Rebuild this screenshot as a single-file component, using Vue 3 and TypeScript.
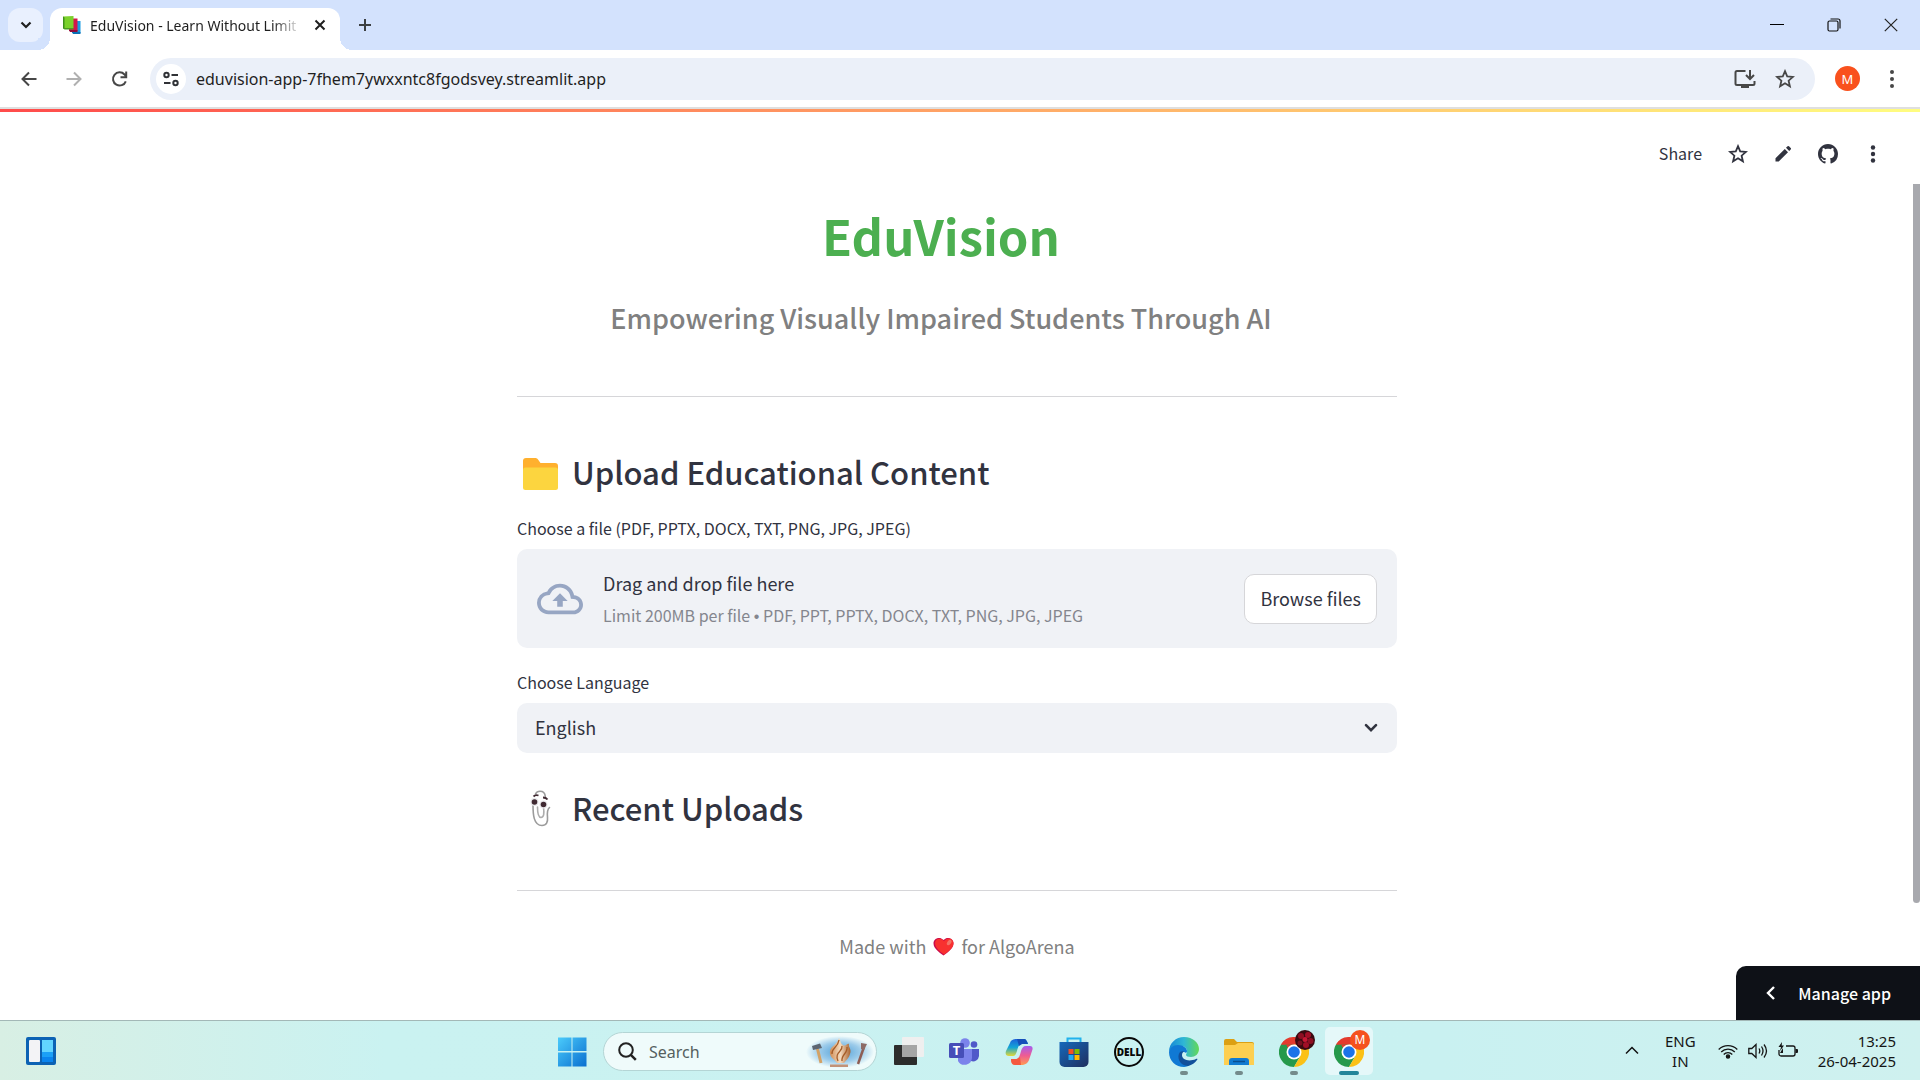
<script setup lang="ts">
import { ref } from 'vue'

const address = ref('eduvision-app-7fhem7ywxxntc8fgodsvey.streamlit.app')
const language = ref('English')
const languages = ['English']
</script>

<template>
  <div class="screen">
    <header class="tabstrip">
      <button class="tab-search" aria-label="Search tabs">
        <svg width="16" height="16" viewBox="0 0 16 16"><path d="M3.500 5.500 8 10l4.500-4.500" fill="none" stroke="#1f1f1f" stroke-width="2.200" /></svg>
      </button>
      <div class="tab">
        <svg class="favicon" width="18" height="18" viewBox="0 0 18 18">
          <path d="M9 5h8.500v12H9z" fill="#1b9de2" />
          <path d="M9 16h8.500v2H10z" fill="#0a6fb5" />
          <path d="M6 2.500h8.500V15H6z" fill="#d3154b" />
          <path d="M6 14h8.500v2H7z" fill="#8f0c3a" />
          <path d="M0 .5L10.500 0v12L0 12.500z" fill="#7bd12b" />
          <path d="M0 .5l1.500 1v11H0z" fill="#3f8f1d" />
          <path d="M0 12h10.500v1.500H1.500z" fill="#4b9b22" />
        </svg>
        <span class="tab-title">EduVision - Learn Without Limit</span>
        <button class="tab-close" aria-label="Close tab">
          <svg width="12" height="12" viewBox="0 0 12 12"><path d="M1.500 1.500l9 9m0-9l-9 9" stroke="#1f1f1f" stroke-width="2" /></svg>
        </button>
      </div>
      <button class="new-tab" aria-label="New tab">
        <svg width="14" height="14" viewBox="0 0 14 14"><path d="M7 1v12M1 7h12" stroke="#3c4043" stroke-width="2" /></svg>
      </button>
      <div class="window-controls">
        <button aria-label="Minimize"><svg width="14" height="14" viewBox="0 0 14 14"><path d="M0 6.500h14" stroke="#000" /></svg></button>
        <button aria-label="Restore"><svg width="14" height="14" viewBox="0 0 14 14" fill="none" stroke="#111" stroke-width="1.200"><rect x="1" y="3" width="10" height="10" rx="1.500" /><path d="M3.500 1H11a2 2 0 0 1 2 2v7.500" /></svg></button>
        <button aria-label="Close"><svg width="14" height="14" viewBox="0 0 14 14"><path d="M.8.8l12.400 12.400m0-12.400L.8 13.200" stroke="#222" stroke-width="1.200" /></svg></button>
      </div>
    </header>

    <nav class="toolbar">
      <button class="nav-button" aria-label="Back"><svg width="20" height="20" viewBox="0 0 20 20"><path d="M17.500 10H3.500m6.500-6.500L3.500 10l6.500 6.500" fill="none" stroke="#474747" stroke-width="2" /></svg></button>
      <button class="nav-button" aria-label="Forward"><svg width="20" height="20" viewBox="0 0 20 20"><path d="M2.500 10h14M10 3.500l6.500 6.500-6.500 6.500" fill="none" stroke="#b0b0b0" stroke-width="2" /></svg></button>
      <button class="nav-button" aria-label="Reload"><svg width="20" height="20" viewBox="0 0 20 20"><path d="M16.800 12.300A6.600 6.600 0 1 1 15.500 5.500L17 7.500M17.200 2.500v5.700H11.500" fill="none" stroke="#474747" stroke-width="2" /></svg></button>
      <div class="omnibox">
        <button class="site-info" aria-label="View site information">
          <svg width="18" height="18" viewBox="0 0 18 18" fill="none" stroke="#303236" stroke-width="2"><circle cx="4.500" cy="5" r="2.200" /><path d="M9.500 5H16M2 13h6.500" /><circle cx="13.500" cy="13" r="2.200" /></svg>
        </button>
        <input v-model="address" class="address" type="text" aria-label="Address" spellcheck="false" />
        <button class="omni-button" aria-label="Install app">
          <svg width="22" height="20" viewBox="0 0 22 20"><path d="M11.500 2H3a1.500 1.500 0 0 0-1.500 1.500v11A1.500 1.500 0 0 0 3 16h16a1.500 1.500 0 0 0 1.500-1.500V12M16 1v9m-4-4l4 4 4-4" fill="none" stroke="#474747" stroke-width="2" /><path d="M7 16h8v3H7z" fill="#474747" /></svg>
        </button>
        <button class="omni-button" aria-label="Bookmark this tab">
          <svg width="20" height="20" viewBox="0 0 20 20"><path d="M10 2.200l2.200 5.200 5.700.5-4.300 3.800 1.300 5.600-4.900-3-4.900 3 1.300-5.600L2.100 7.900l5.700-.5z" fill="none" stroke="#474747" stroke-width="1.800" /></svg>
        </button>
      </div>
      <button class="profile" aria-label="Profile">M</button>
      <button class="menu-button" aria-label="Browser menu"><svg width="20" height="20" viewBox="0 0 20 20" fill="#474747"><circle cx="10" cy="3" r="2" /><circle cx="10" cy="10" r="2" /><circle cx="10" cy="17" r="2" /></svg></button>
    </nav>
    <div class="decoration"></div>

    <div class="app">
      <div class="app-header">
        <button class="share">Share</button>
        <button class="action" aria-label="Favourite"><svg width="20" height="20" viewBox="0 0 20 20"><path d="M10 2.200l2.200 5.200 5.700.5-4.300 3.800 1.300 5.600-4.900-3-4.900 3 1.300-5.600L2.100 7.900l5.700-.5z" fill="none" stroke="#31333f" stroke-width="1.800" /></svg></button>
        <button class="action" aria-label="Edit"><svg width="18" height="18" viewBox="0 0 18 18" fill="#31333f"><path d="M1.500 13.300L10.800 4l3.200 3.200-9.300 9.300H1.500zM12 2.800l1.600-1.500a1 1 0 0 1 1.400 0L16.700 3a1 1 0 0 1 0 1.400l-1.500 1.600z" /></svg></button>
        <button class="action" aria-label="View source on GitHub"><svg width="20" height="20" viewBox="0 0 16 16" fill="#31333f"><path d="M8 0C3.580 0 0 3.580 0 8c0 3.540 2.290 6.530 5.470 7.590.4.070.55-.17.55-.38 0-.19-.01-.82-.01-1.490-2.010.37-2.530-.49-2.690-.94-.09-.23-.48-.94-.82-1.130-.28-.15-.68-.52-.01-.53.63-.01 1.080.58 1.230.82.72 1.210 1.870.87 2.330.66.07-.52.28-.87.51-1.070-1.780-.2-3.640-.89-3.640-3.950 0-.87.31-1.590.82-2.150-.08-.2-.36-1.020.08-2.120 0 0 .67-.21 2.200.82.64-.18 1.320-.27 2-.27s1.360.09 2 .27c1.530-1.040 2.200-.82 2.200-.82.44 1.100.16 1.920.08 2.120.51.56.82 1.270.82 2.150 0 3.070-1.870 3.750-3.650 3.950.29.25.54.73.54 1.480 0 1.070-.01 1.930-.01 2.200 0 .21.15.46.55.38A8.010 8.010 0 0 0 16 8c0-4.420-3.580-8-8-8z" /></svg></button>
        <button class="action" aria-label="App menu"><svg width="20" height="20" viewBox="0 0 20 20" fill="#31333f"><circle cx="10" cy="3.500" r="2.200" /><circle cx="10" cy="10" r="2.200" /><circle cx="10" cy="16.500" r="2.200" /></svg></button>
      </div>

      <main class="content">
        <h1>EduVision</h1>
        <p class="tagline">Empowering Visually Impaired Students Through AI</p>
        <hr />
        <h2>
          <svg class="heading-icon" width="48" height="40" viewBox="0 0 48 40">
            <path d="M6 9a3 3 0 0 1 3-3h9c1.500 0 2.300.5 3 1.500l2.500 3.500H38a3 3 0 0 1 3 3v6H6z" fill="#ffb02e" />
            <rect x="6" y="15.500" width="35" height="22.500" rx="2.500" fill="#fcd53f" />
          </svg>
          Upload Educational Content
        </h2>

        <label class="field-label" for="browse">Choose a file (PDF, PPTX, DOCX, TXT, PNG, JPG, JPEG)</label>
        <section class="dropzone">
          <svg width="46" height="46" viewBox="0 0 24 24" fill="#97a6c3"><path d="M19.350 10.040A7.490 7.490 0 0 0 12 4C9.110 4 6.600 5.640 5.350 8.040A5.994 5.994 0 0 0 0 14c0 3.310 2.690 6 6 6h13c2.760 0 5-2.240 5-5 0-2.640-2.050-4.780-4.650-4.960zM19 18H6c-2.210 0-4-1.790-4-4 0-2.050 1.530-3.760 3.560-3.970l1.070-.11.500-.95A5.469 5.469 0 0 1 12 6c2.620 0 4.880 1.860 5.390 4.430l.3 1.500 1.530.11A2.980 2.980 0 0 1 22 15c0 1.650-1.350 3-3 3zM8 13h2.550v3h2.900v-3H16l-4-4z" /></svg>
          <div class="drop-text">
            <span class="drop-title">Drag and drop file here</span>
            <span class="drop-hint">Limit 200MB per file <span class="bullet">•</span> PDF, PPT, PPTX, DOCX, TXT, PNG, JPG, JPEG</span>
          </div>
          <button id="browse" class="browse">Browse files</button>
        </section>

        <label class="field-label language-label" for="language">Choose Language</label>
        <div class="select-wrap">
          <select id="language" v-model="language">
            <option v-for="item in languages" :key="item">{{ item }}</option>
          </select>
          <svg class="select-arrow" width="14" height="10" viewBox="0 0 14 10"><path d="M2 2.200l5 5 5-5" fill="none" stroke="#31333f" stroke-width="2.600" stroke-linecap="round" /></svg>
        </div>

        <h2 class="recent">
          <svg class="heading-icon" width="48" height="40" viewBox="0 0 48 40">
            <g fill="none" stroke="#9b9b9b" stroke-width="1.600" stroke-linecap="round">
              <path d="M18.500 6c1-2 2.500-2.700 4.500-2.700 3 0 5 2.200 5.300 5.200" />
              <path d="M16 17c0 9 .5 20.500 9 20.500 4.500 0 6-3.500 5.500-8.500-.4-4-.3-7.500 2-9.500" />
              <path d="M20.500 19c0 6 .5 10.500 3.500 10.500s3.300-4 2.500-10.500" stroke="#adadad" />
            </g>
            <circle cx="17.500" cy="14" r="4" fill="#e9e9ec" /><circle cx="26.500" cy="16.500" r="4" fill="#e9e9ec" />
            <circle cx="17.500" cy="14" r="2.800" fill="#402a32" /><circle cx="26.500" cy="16.500" r="2.800" fill="#402a32" />
            <path d="M16.500 8.500q2-2 5-1M26 9.500q3 0 4.500 2" fill="none" stroke="#402a32" stroke-width="1.800" />
          </svg>
          Recent Uploads
        </h2>
        <hr class="lower" />
        <p class="credit">
          Made with
          <svg width="21" height="19" viewBox="0 0 21 19" role="img" aria-label="love"><path d="M10.500 18.500C6 15 .5 11.500.5 6.200.5 1.500 6.500-1.200 10.500 3c4-4.200 10-1.500 10 3.200 0 5.300-5.500 8.800-10 12.300z" fill="#ca0b4a" /><path d="M11 17.500C7 14.500 2 11 2 6c0-4.500 6-6 9-1.800C14-.6 20.500 1.200 20.500 6.200c0 4.800-5.500 8.300-9.500 11.300z" fill="#f8312f" /><ellipse cx="16.200" cy="5.500" rx="1.900" ry="3" transform="rotate(35 16.200 5.500)" fill="#f37366" /></svg>
          for AlgoArena
        </p>
      </main>

      <div class="scroll-thumb"></div>
      <button class="manage">
        <svg width="10" height="16" viewBox="0 0 10 16"><path d="M8 2L2 8l6 6" fill="none" stroke="#fff" stroke-width="2.400" /></svg>
        Manage app
      </button>
    </div>

    <footer class="taskbar">
      <div class="task-left">
        <button class="task" aria-label="Widgets">
          <svg width="30" height="28" viewBox="0 0 30 28"><rect width="30" height="28" rx="2" fill="#0c62b4" /><rect x="3" y="3" width="11" height="22" rx="1" fill="#f3f3f6" /><path d="M16 3h11v12H16z" fill="#62d4ff" /><path d="M16 15h11v5H16z" fill="#1ba0f7" /><path d="M16 20h11v5H16z" fill="#0a84ee" /></svg>
        </button>
      </div>
      <div class="task-center">
        <button class="task" aria-label="Start">
          <svg width="30" height="30" viewBox="0 0 30 30"><defs><linearGradient id="win" x1="0" y1="0" x2="1" y2="1"><stop offset="0" stop-color="#4bcbfb" /><stop offset="1" stop-color="#0a6fd0" /></linearGradient></defs><path d="M1 .5h13.500V14H1zM15.500.5H29.500V14h-14zM1 15.500h13.500v14H1zM15.500 15.500h14v14h-14z" fill="url(#win)" /></svg>
        </button>
        <div class="search">
          <svg width="19" height="19" viewBox="0 0 19 19"><circle cx="8" cy="8" r="6.800" fill="none" stroke="#222" stroke-width="2" /><path d="M12.800 12.800l5 5" stroke="#222" stroke-width="2.500" /></svg>
          <input type="search" placeholder="Search" aria-label="Search" />
          <svg class="search-art" width="68" height="34" viewBox="0 0 68 34">
            <defs><radialGradient id="glow"><stop offset="0" stop-color="#4f9fd8" /><stop offset=".6" stop-color="#9ccbea" /><stop offset="1" stop-color="#effbfb" /></radialGradient><linearGradient id="wood"><stop offset="0" stop-color="#d08b52" /><stop offset=".5" stop-color="#f4dcc0" /><stop offset="1" stop-color="#a9622d" /></linearGradient></defs>
            <ellipse cx="34" cy="17" rx="34" ry="16" fill="url(#glow)" />
            <path d="M11 12l4 16" stroke="#d3a266" stroke-width="3" /><path d="M6 11l8-2.500 2 4.500-9 2z" fill="#5d6672" />
            <path d="M58 12l-6 17" stroke="#8e5d55" stroke-width="2.500" /><path d="M55 8l6 1-3 6-3-1z" fill="#8d6b67" />
            <path d="M33 3c2 3 1 5 4 7s4-2 6-1c-1 3 3 5 1 10-1 4-4 6-6 9h-7c-3-4-8-6-7-12 1-5 7-6 9-13z" fill="url(#wood)" />
            <path d="M33 5c-1 8-8 8-7 14m10-8c1 6-8 6-4 15m9-14c1 6-6 8-5 14" stroke="#a65d28" stroke-width="1.300" fill="none" /><path d="M24 29.500h18v2.500H24z" fill="#c29277" />
          </svg>
        </div>
        <button class="task" aria-label="Task view">
          <svg width="30" height="30" viewBox="0 0 30 30"><rect y="8" width="23" height="20" rx="1" fill="#2c2c2c" /><rect x="8" width="22" height="20" rx="1" fill="#efefef" /><path d="M8 8h15v12H8z" fill="#a5a5a5" /></svg>
        </button>
        <button class="task" aria-label="Teams">
          <svg width="30" height="30" viewBox="0 0 30 30"><circle cx="16" cy="6" r="4.800" fill="#7b83eb" /><circle cx="25" cy="7.500" r="3.300" fill="#5059c9" /><path d="M22 12h8v7a6 6 0 0 1-8 5z" fill="#5059c9" /><path d="M9 12h14v9a7.500 7.500 0 0 1-14 3z" fill="#7b83eb" /><rect y="6" width="15" height="15" rx="1.500" fill="#464eb8" /><text x="7.500" y="18" text-anchor="middle" class="teams-letter">T</text></svg>
        </button>
        <button class="task" aria-label="Copilot">
          <svg width="30" height="30" viewBox="0 0 30 30"><defs><linearGradient id="cpa" x1="0" y1="0" x2="0" y2="1"><stop offset="0" stop-color="#1b62dc" /><stop offset=".5" stop-color="#14a6d5" /><stop offset="1" stop-color="#e3d735" /></linearGradient><linearGradient id="cpb" x1="0" y1="0" x2="0" y2="1"><stop offset="0" stop-color="#a45cf0" /><stop offset=".5" stop-color="#ee5c93" /><stop offset="1" stop-color="#ff9b52" /></linearGradient></defs><path d="M13 2h7c2 0 3 2 4 5h-6c-3 0-4 3-5 7-1 3-2 5-4 5H5c-3 0-4-2-3-5l4-8c1-3 3-4 7-4z" fill="url(#cpa)" /><path d="M13 2h7c2 0 3 2 4 5h-6l-3 2z" fill="#154fb9" /><path d="M17 28h-6c-3 0-4-3-4-6h5c3 0 4-4 5-8 1-3 2-5 5-5h4c3 0 3 3 2 5l-3 9c-1 3-4 5-8 5z" fill="url(#cpb)" /><path d="M17 28h-6c-3 0-4-3-4-6h6l3-2z" fill="#f5583f" /></svg>
        </button>
        <button class="task" aria-label="Microsoft Store">
          <svg width="30" height="30" viewBox="0 0 30 30"><defs><linearGradient id="store" x1="0" y1="0" x2="1" y2="1"><stop offset="0" stop-color="#1469bc" /><stop offset="1" stop-color="#202f5e" /></linearGradient></defs><path d="M8.500 6V1.500h13V6" fill="none" stroke="#21b2ed" stroke-width="2" /><path d="M.5 5h29v20a5 5 0 0 1-5 5h-19a5 5 0 0 1-5-5z" fill="url(#store)" /><path d="M9.500 12h5v5h-5z" fill="#f25022" /><path d="M15.500 12h5v5h-5z" fill="#7fba00" /><path d="M9.500 18h5v5h-5z" fill="#20a9f1" /><path d="M15.500 18h5v5h-5z" fill="#ffb900" /></svg>
        </button>
        <button class="task" aria-label="Dell">
          <svg width="30" height="30" viewBox="0 0 30 30"><circle cx="15" cy="15" r="14" fill="none" stroke="#080808" stroke-width="2" /><text x="15" y="19" text-anchor="middle" class="dell-text">DELL</text></svg>
        </button>
        <button class="task running" aria-label="Edge">
          <svg width="30" height="30" viewBox="0 0 30 30"><defs><linearGradient id="edge"><stop offset="0" stop-color="#1687d6" /><stop offset=".5" stop-color="#2fb7d5" /><stop offset="1" stop-color="#63d957" /></linearGradient></defs><path d="M0 15C0 6 7 0 15 0c9 0 15 6 15 12 0 5-4 8-8 8-3 0-5-1-5-2s1-2 1-4c0-3-3-5-6-5C5 9 1 12 0 15z" fill="url(#edge)" /><path d="M0 15c1-4 4-7 9-7 5 0 9 3 9 6 0 1-.5 1.500-1 2-2-2-6-1-6 3 0 5 5 8 12 7-3 3-6 4-8 4C7 30 0 24 0 15z" fill="#1079d4" /><path d="M11 15c-4 5 0 14 8 14 4-1 7-3 9-6 1-1 0-1.500-1-1-7 3-14 1-14-4 0-2 1-3 2-3.500-1-.5-3-.5-4 .5z" fill="#12509b" /></svg>
        </button>
        <button class="task running" aria-label="File Explorer">
          <svg width="30" height="30" viewBox="0 0 30 30"><path d="M0 4a2 2 0 0 1 2-2h8l3 3h15a2 2 0 0 1 2 2v5H0z" fill="#dca013" /><path d="M0 8h11l3-2h14a2 2 0 0 1 2 2v20H0z" fill="#fdcf51" /><path d="M5 28v-4a3 3 0 0 1 3-3h14a3 3 0 0 1 3 3v4z" fill="#117bd1" /><path d="M9 24.500h12" stroke="#084f91" stroke-width="1.500" /></svg>
        </button>
        <button v-for="active in [false, true]" :key="String(active)" class="task running" :class="{ active }" aria-label="Google Chrome">
          <svg width="30" height="30" viewBox="0 0 30 30"><path d="M15 15L2 7.500A15 15 0 0 1 28 7.500z" fill="#e33b2e" /><path d="M2 7.500A15 15 0 0 0 15 30l6.500-11.300L15 15z" fill="#26994b" /><path d="M15 7.500h13A15 15 0 0 1 15 30l6.500-11.300z" fill="#fbc116" /><path d="M2 7.500l6.500 11.300L15 7.500z" fill="#26994b" /><path d="M2 7.500a15 15 0 0 1 3-3.500l4 7 6-3.500z" fill="#e33b2e" /><circle cx="15" cy="15" r="7.500" fill="#fff" /><circle cx="15" cy="15" r="5.800" fill="#1b73e8" /></svg>
          <span v-if="active" class="badge badge-letter">M</span>
          <svg v-else class="badge" viewBox="0 0 20 20"><circle cx="10" cy="10" r="10" fill="#3a0a10" /><circle cx="6" cy="6" r="3" fill="#8e0f22" /><circle cx="13" cy="5" r="3" fill="#a10f26" /><circle cx="15.500" cy="11" r="3" fill="#8e0f22" /><circle cx="11" cy="15" r="3" fill="#a10f26" /><circle cx="5" cy="13" r="2.500" fill="#76101f" /><circle cx="10" cy="9.500" r="2.500" fill="#c81834" /></svg>
        </button>
      </div>
      <div class="tray">
        <button class="tray-up" aria-label="Show hidden icons"><svg width="14" height="9" viewBox="0 0 14 9"><path d="M1 7.500l6-6 6 6" fill="none" stroke="#111" stroke-width="1.500" /></svg></button>
        <button class="tray-lang"><span>ENG</span><span>IN</span></button>
        <button class="tray-status" aria-label="Network, volume and battery">
          <svg width="20" height="16" viewBox="0 0 20 16" fill="none" stroke="#151515" stroke-width="1.300"><path d="M.7 6.500a13 13 0 0 1 18.600 0M3.200 9a9.500 9.500 0 0 1 13.600 0M5.700 11.500a6 6 0 0 1 8.600 0" /><circle cx="10" cy="13.500" r="1.600" fill="#151515" /></svg>
          <svg width="20" height="18" viewBox="0 0 20 18" fill="none" stroke="#151515" stroke-width="1.300"><path d="M.8 6.500v5h3l4.200 4v-13l-4.200 4zM11 6.500q1.600 2.500 0 5M13.500 4.500q3 4.500 0 9M16 2.500q5 6.500 0 13" /></svg>
          <svg width="20" height="18" viewBox="0 0 20 18"><path d="M8 4h7a2 2 0 0 1 2 2v6a2 2 0 0 1-2 2H3a2 2 0 0 1-2-2V8" fill="none" stroke="#151515" stroke-width="1.300" /><path d="M17.500 7h1.500q1 0 1 1v2q0 1-1 1h-1.500zM4 0L.5 5H3L2 9l4-5.500H3.700zM5 6v5H2z" fill="#151515" /></svg>
        </button>
        <button class="tray-clock"><span>13:25</span><span>26-04-2025</span></button>
      </div>
    </footer>
  </div>
</template>

<style>
body {
  margin: 0;
}
</style>

<style scoped>
.screen {
  --ui: 'Noto Sans', 'Open Sans', sans-serif;
  --app: 'Noto Sans CJK SC', 'Noto Sans', sans-serif;
  display: flex;
  flex-direction: column;
  min-height: 100vh;
  background: #fff;
  font-family: var(--ui);
  color: #1f1f1f;
}
.screen * {
  box-sizing: border-box;
}
button {
  display: inline-flex;
  align-items: center;
  justify-content: center;
  padding: 0;
  border: 0;
  background: none;
  color: inherit;
  font: inherit;
  flex: none;
}
svg {
  display: block;
  flex: none;
}
input {
  border: 0;
  outline: 0;
  padding: 0;
  background: none;
  min-width: 0;
  color: inherit;
  font-family: inherit;
}

.tabstrip {
  display: flex;
  height: 50px;
  padding: 8px 1px 0 8px;
  background: #d3e2fd;
}
.tab-search {
  width: 35px;
  height: 34px;
  border-radius: 12px;
  background: #e9f0fe;
}
.tab {
  position: relative;
  display: flex;
  align-items: center;
  width: 290px;
  height: 42px;
  margin-left: 7px;
  padding: 0 12px 8px 13px;
  border-radius: 12px 12px 0 0;
  background: #fff;
}
.tab::before,
.tab::after {
  content: '';
  position: absolute;
  bottom: 0;
  width: 12px;
  height: 12px;
}
.tab::before {
  left: -12px;
  background: radial-gradient(circle at 0 0, #d3e2fd 12px, #fff 12px);
}
.tab::after {
  right: -12px;
  background: radial-gradient(circle at 100% 0, #d3e2fd 12px, #fff 12px);
}
.tab-title {
  flex: 1;
  margin: 0 10px 0 9px;
  padding-top: 1px;
  white-space: nowrap;
  font-size: 14px;
  line-height: 20px;
  mask-image: linear-gradient(to right, #000 86%, transparent);
}
.tab-close {
  width: 16px;
  height: 20px;
}
.new-tab {
  width: 34px;
  height: 34px;
  margin-left: 8px;
}
.window-controls {
  display: flex;
  margin-left: auto;
  height: 34px;
}
.window-controls button {
  width: 57px;
}

.toolbar {
  display: flex;
  align-items: center;
  height: 57px;
  padding: 0 13px 0 6px;
  background: #fff;
}
.nav-button {
  width: 45px;
  height: 40px;
}
.omnibox {
  display: flex;
  align-items: center;
  flex: 1;
  height: 42px;
  margin-left: 9px;
  padding: 0 10px 0 6px;
  border-radius: 21px;
  background: #ebf0f9;
}
.site-info {
  width: 30px;
  height: 30px;
  border-radius: 50%;
  background: #fff;
}
.address {
  flex: 1;
  margin-left: 10px;
  height: 30px;
  font-size: 16px;
}
.omni-button {
  width: 40px;
  height: 40px;
}
.profile {
  width: 25px;
  height: 25px;
  margin: 0 17px 0 20px;
  border-radius: 50%;
  background: #f9511d;
  color: #fff;
  font-size: 13px;
}
.menu-button {
  width: 30px;
  height: 30px;
}
.decoration {
  height: 5px;
  border-top: 2px solid #dfdfdf;
  background: linear-gradient(to right, #ff4b4b, #fffd80) padding-box;
}

.app {
  position: relative;
  flex: 1;
  padding-right: 6px;
  font-family: var(--app);
  color: #31333f;
}
.app-header {
  display: flex;
  align-items: center;
  justify-content: flex-end;
  height: 84px;
  padding-right: 19px;
}
.share {
  margin-right: 13px;
  padding-bottom: 2px;
  font-size: 16px;
}
.action {
  width: 45px;
  height: 40px;
}
.content {
  max-width: 880px;
  margin: 0 auto;
}
h1 {
  margin: 9px 0 0;
  padding-right: 32px;
  text-align: center;
  color: #4caf50;
  font-size: 49px;
  line-height: 60px;
  font-weight: 700;
}
.tagline {
  margin: 35px 0 0;
  padding-right: 32px;
  text-align: center;
  color: #808080;
  font-size: 27px;
  line-height: 36px;
  font-weight: 500;
}
hr {
  margin: 60px 0 0;
  border: 0;
  border-top: 1px solid #d6d6d9;
}
h2 {
  display: flex;
  align-items: center;
  margin: 55px 0 0;
  font-size: 31px;
  line-height: 40px;
  font-weight: 500;
}
.heading-icon {
  margin-right: 7px;
}
.field-label {
  display: block;
  margin-top: 24px;
  font-size: 16px;
  line-height: 24px;
}
.dropzone {
  display: flex;
  align-items: center;
  min-height: 99px;
  margin-top: 9px;
  padding: 12px 20px;
  border-radius: 10px;
  background: #f0f2f6;
}
.drop-text {
  display: flex;
  flex-direction: column;
  flex: 1;
  margin-left: 20px;
  padding-top: 2px;
  line-height: 32px;
}
.drop-title {
  font-size: 18px;
}
.drop-hint {
  font-size: 16px;
  color: #84868e;
}
.bullet {
  font-family: 'Liberation Sans', sans-serif;
}
.browse {
  height: 50px;
  padding: 0 15px 2px;
  border: 1px solid #d6d6d9;
  border-radius: 10px;
  background: #fff;
  font-size: 18px;
}
.language-label {
  margin-top: 22px;
}
.select-wrap {
  position: relative;
  margin-top: 9px;
}
select {
  display: block;
  width: 100%;
  height: 50px;
  padding: 0 18px 2px;
  border: 0;
  border-radius: 10px;
  appearance: none;
  background: #f0f2f6;
  color: #31333f;
  font-family: inherit;
  font-size: 18px;
}
.select-arrow {
  position: absolute;
  right: 19px;
  top: 20px;
  pointer-events: none;
}
.recent {
  margin-top: 35px;
}
.lower {
  margin-top: 62px;
}
.credit {
  display: flex;
  align-items: center;
  justify-content: center;
  gap: 7px;
  margin: 40px 0 58px;
  color: #808080;
  font-size: 18px;
  line-height: 30px;
}
.scroll-thumb {
  position: absolute;
  top: 72px;
  right: 0;
  bottom: 117px;
  width: 7px;
  border-radius: 0 0 4px 4px;
  background: #a8a9ae;
}
.manage {
  position: absolute;
  right: 0;
  bottom: 0;
  gap: 22px;
  height: 54px;
  padding: 0 29px 1px 30px;
  border-radius: 10px 0 0 0;
  background: #0e1117;
  color: #fff;
  font-size: 16px;
  font-weight: 500;
}

.taskbar {
  display: grid;
  grid-template-columns: 1fr auto 1fr;
  height: 60px;
  border-top: 1px solid #a3b8b7;
  background: linear-gradient(to right, #d8efe4, #caf2f1 20%, #c9f1f1 75%, #cff1ef);
}
.task-left,
.task-center,
.tray {
  display: flex;
  align-items: center;
}
.task-left {
  padding: 0 0 2px 13px;
}
.task {
  position: relative;
  width: 55px;
  height: 59px;
}
.running::after {
  content: '';
  position: absolute;
  bottom: 6px;
  left: 50%;
  width: 8px;
  height: 4px;
  margin-left: -4px;
  border-radius: 2px;
  background: #748b8b;
}
.active::before {
  content: '';
  position: absolute;
  inset: 5px 3px 6px 4px;
  border-radius: 5px;
  background: #e5f8f9;
}
.active svg {
  position: relative;
}
.active::after {
  width: 20px;
  margin-left: -10px;
  background: #23869a;
}
.badge {
  position: absolute;
  top: 8px;
  right: 6px;
  width: 20px;
  height: 20px;
}
.badge-letter {
  border-radius: 50%;
  background: #f5511e;
  color: #fff;
  font-size: 12px;
  line-height: 20px;
}
.teams-letter {
  font: 700 13px 'Noto Sans', sans-serif;
  fill: #fff;
}
.dell-text {
  font: 800 10px 'Open Sans', sans-serif;
  fill: #080808;
}
.search {
  position: relative;
  display: flex;
  align-items: center;
  width: 274px;
  height: 39px;
  margin: 0 4px;
  padding: 0 2px 0 14px;
  border: 1px solid #b4d5d5;
  border-radius: 20px;
  background: #effbfb;
}
.search input {
  flex: 1;
  margin-left: 12px;
  font-size: 16px;
}
.search input::placeholder {
  color: #555f5f;
  opacity: 1;
}
.tray {
  justify-content: flex-end;
  padding: 0 24px 2px 0;
  font-size: 15px;
  line-height: 20px;
  color: #151515;
}
.tray-up {
  width: 20px;
  height: 40px;
  margin-right: 23px;
}
.tray-lang,
.tray-clock {
  flex-direction: column;
}
.tray-status {
  gap: 10px;
  margin: 0 20px 0 22px;
}
.tray-clock {
  align-items: flex-end;
}
</style>
